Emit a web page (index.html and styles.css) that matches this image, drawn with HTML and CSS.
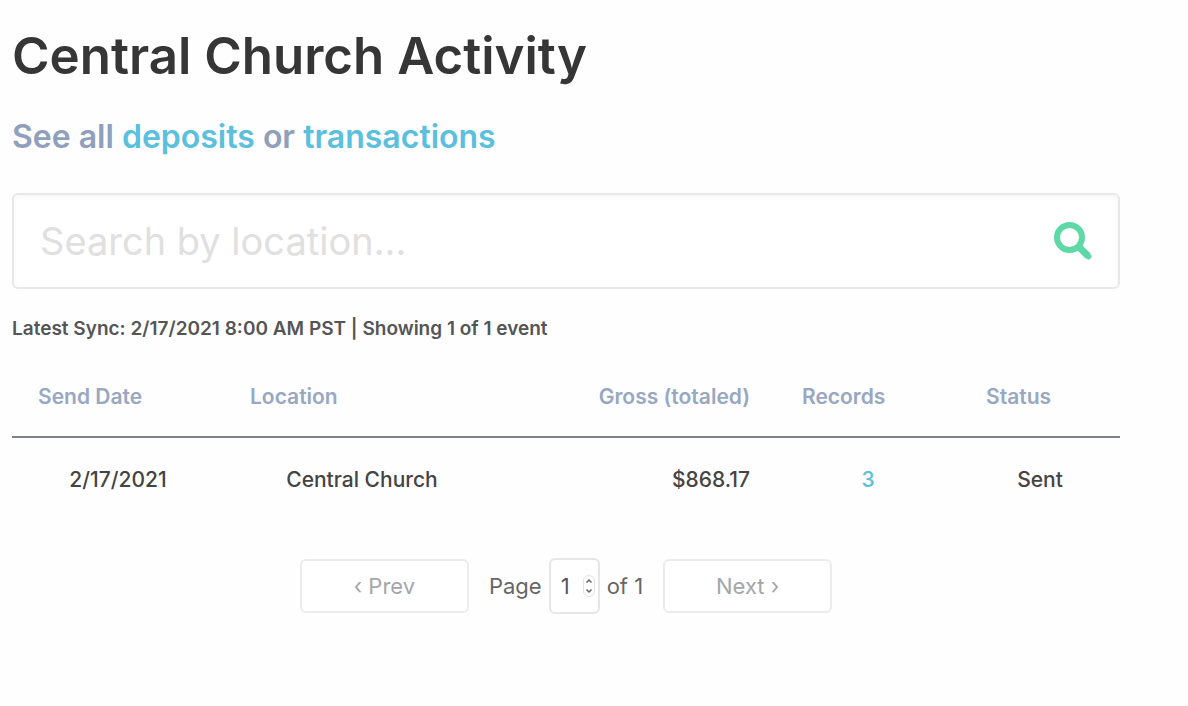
FILE: index.html
```html
<!DOCTYPE html>
<html lang="en">
<head>
  <meta charset="UTF-8">
  <meta name="viewport" content="width=device-width, initial-scale=1.0">
  <title>Central Church Activity</title>
  <link rel="stylesheet" href="styles.css">
</head>
<body>
  <main class="activity">
    <h1>Central Church Activity</h1>
    <p class="see-all">See all <a href="#deposits">deposits</a> or <a href="#transactions">transactions</a></p>

    <!-- Search -->
    <form class="search" role="search">
      <input type="text" name="location" placeholder="Search by location..." aria-label="Search by location">
      <button type="submit" class="search-btn" aria-label="Search">
        <svg viewBox="0 0 38 38" fill="none" stroke="currentColor">
          <circle cx="15.5" cy="15.5" r="12.5" stroke-width="6"/>
          <path d="M25.5 25.5L34 34" stroke-width="7"/>
          <path d="M33 33L34.5 34.5" stroke-width="6" stroke-linecap="round"/>
        </svg>
      </button>
    </form>

    <p class="sync">Latest Sync: 2/17/2021 8:00 AM PST | Showing 1 of 1 event</p>

    <!-- Events -->
    <table class="events">
      <thead>
        <tr>
          <th class="col-date">Send Date</th>
          <th>Location</th>
          <th class="col-gross">Gross (totaled)</th>
          <th class="col-records">Records</th>
          <th class="col-status">Status</th>
        </tr>
      </thead>
      <tbody>
        <tr>
          <td>2/17/2021</td>
          <td>Central Church</td>
          <td class="col-gross">$868.17</td>
          <td><a href="#records">3</a></td>
          <td>Sent</td>
        </tr>
      </tbody>
    </table>

    <!-- Pagination -->
    <nav class="pagination" aria-label="Pagination">
      <button type="button" class="page-btn" disabled>‹ Prev</button>
      <div class="page-info">
        <label for="page">Page</label>
        <div class="page-box">
          <input type="number" id="page" name="page" value="1" min="1" max="1">
          <svg class="stepper" viewBox="0 0 12 22" fill="none">
            <rect x="0.5" y="0.5" width="11" height="21" rx="5.5" fill="#fff" stroke="#e2e2e2"/>
            <path d="M3.5 7.5L6 5L8.5 7.5M3.5 14.5L6 17L8.5 14.5" stroke="#666" stroke-width="1.5"/>
          </svg>
        </div>
        <span>of 1</span>
      </div>
      <button type="button" class="page-btn" disabled>Next ›</button>
    </nav>
  </main>
</body>
</html>
```
FILE: styles.css
```css
* {
  box-sizing: border-box;
}
body {
  font-family: Inter, "Liberation Sans", sans-serif;
  margin: 0;
  background: #fefefe;
  color: #444;
}
a {
  color: #5bbfde;
  text-decoration: none;
}
a:hover {
  text-decoration: underline;
}
.activity {
  padding: 24px 68px 24px 12px;
}
h1 {
  margin: 0;
  font-size: 51px;
  line-height: 64px;
  font-weight: 600;
  color: #363636;
}
.see-all {
  margin: 29px 0 36px;
  font-size: 32px;
  line-height: 40px;
  font-weight: 600;
  color: #8f9fbc;
}
.search {
  display: flex;
  align-items: center;
  height: 96px;
  padding: 0 26px;
  background: #fff;
  border: 2px solid #e8e8e8;
  border-radius: 6px;
  box-shadow: inset 0 2px 4px rgba(0, 0, 0, 0.04);
}
.search input {
  flex: 1;
  min-width: 0;
  padding: 0;
  border: none;
  outline: none;
  background: transparent;
  font-family: inherit;
  font-size: 38px;
  color: #444;
}
.search input::placeholder {
  color: #e0e0e0;
  opacity: 1;
}
.search-btn {
  display: flex;
  padding: 0;
  border: none;
  background: none;
  color: #5ed8a5;
  cursor: pointer;
}
.search-btn svg {
  width: 38px;
  height: 38px;
}
.sync {
  margin: 28px 0 24px;
  font-size: 19px;
  line-height: 24px;
  font-weight: 600;
  color: #555;
}

/* Events table */
.events {
  width: 100%;
  table-layout: fixed;
  border-collapse: collapse;
  font-size: 21px;
  line-height: 28px;
}
.events th {
  padding: 18px 26px 25px;
  border-bottom: 2px solid #7d808a;
  text-align: left;
  font-weight: 600;
  color: #98a7c2;
  white-space: nowrap;
}
.events td {
  padding: 28px 26px;
  text-align: center;
  font-weight: 500;
}
.events .col-gross {
  text-align: right;
}
.col-date {
  width: 212px;
}
.col-gross {
  width: 276px;
}
.col-records {
  width: 184px;
}
.col-status {
  width: 160px;
}

/* Pagination */
.pagination {
  display: flex;
  justify-content: center;
  align-items: center;
  gap: 20px;
  margin-top: 36px;
  font-size: 22px;
  color: #666;
}
.page-btn {
  width: 169px;
  height: 54px;
  background: #fff;
  border: 2px solid #ececec;
  border-radius: 6px;
  font-family: inherit;
  font-size: 22px;
  color: #a4a6aa;
}
.page-info {
  display: flex;
  align-items: center;
  gap: 7px;
}
.page-box {
  display: flex;
  align-items: center;
  width: 51px;
  height: 56px;
  padding: 0 3px 0 10px;
  background: #fff;
  border: 2px solid #e6e6e6;
  border-radius: 6px;
}
.page-box input {
  flex: 1;
  min-width: 0;
  padding: 0;
  border: none;
  outline: none;
  background: transparent;
  font-family: inherit;
  font-size: 22px;
  color: #555;
  appearance: textfield;
}
.page-box input::-webkit-inner-spin-button {
  appearance: none;
  margin: 0;
}
.stepper {
  width: 12px;
  height: 22px;
}
```
